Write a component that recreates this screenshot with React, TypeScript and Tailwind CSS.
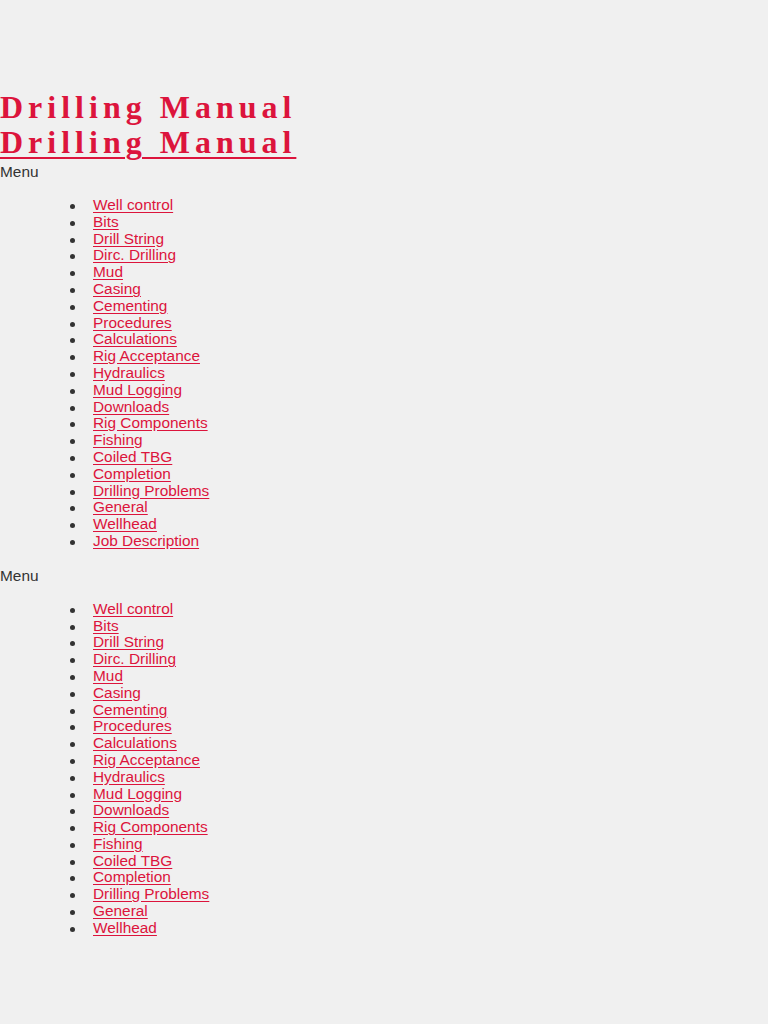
const links = [
  "Well control",
  "Bits",
  "Drill String",
  "Dirc. Drilling",
  "Mud",
  "Casing",
  "Cementing",
  "Procedures",
  "Calculations",
  "Rig Acceptance",
  "Hydraulics",
  "Mud Logging",
  "Downloads",
  "Rig Components",
  "Fishing",
  "Coiled TBG",
  "Completion",
  "Drilling Problems",
  "General",
  "Wellhead",
];

function NavMenu({ items }: { items: string[] }) {
  return (
    <nav>
      <div className="text-[15.4px] leading-[17px] text-[#333]">Menu</div>
      <ul className="pl-[70px] my-[17px] text-[15.4px] leading-[16.8px] text-[#333]">
        {items.map((item) => (
          <li key={item} className="flex items-start">
            {/* bullet dot */}
            <span className="mt-[7px] mr-[18px] w-[5px] h-[5px] rounded-full bg-[#333] shrink-0" />
            <a href="#" className="text-[#dc143c] underline underline-offset-2">
              {item}
            </a>
          </li>
        ))}
      </ul>
    </nav>
  );
}

export default function App() {
  return (
    <div className="min-h-screen bg-[#f0f0f0] pt-[90px]" style={{ fontFamily: '"Liberation Sans", Arial, sans-serif' }}>
      <header className="mb-[3px] font-['Liberation_Serif',serif] font-bold text-[32px] leading-[35px] tracking-[5px] text-[#dc143c]">
        <p>Drilling Manual</p>
        <a href="#" className="underline underline-offset-4 decoration-2">
          Drilling Manual
        </a>
      </header>
      <NavMenu items={[...links, "Job Description"]} />
      <NavMenu items={links} />
    </div>
  );
}
